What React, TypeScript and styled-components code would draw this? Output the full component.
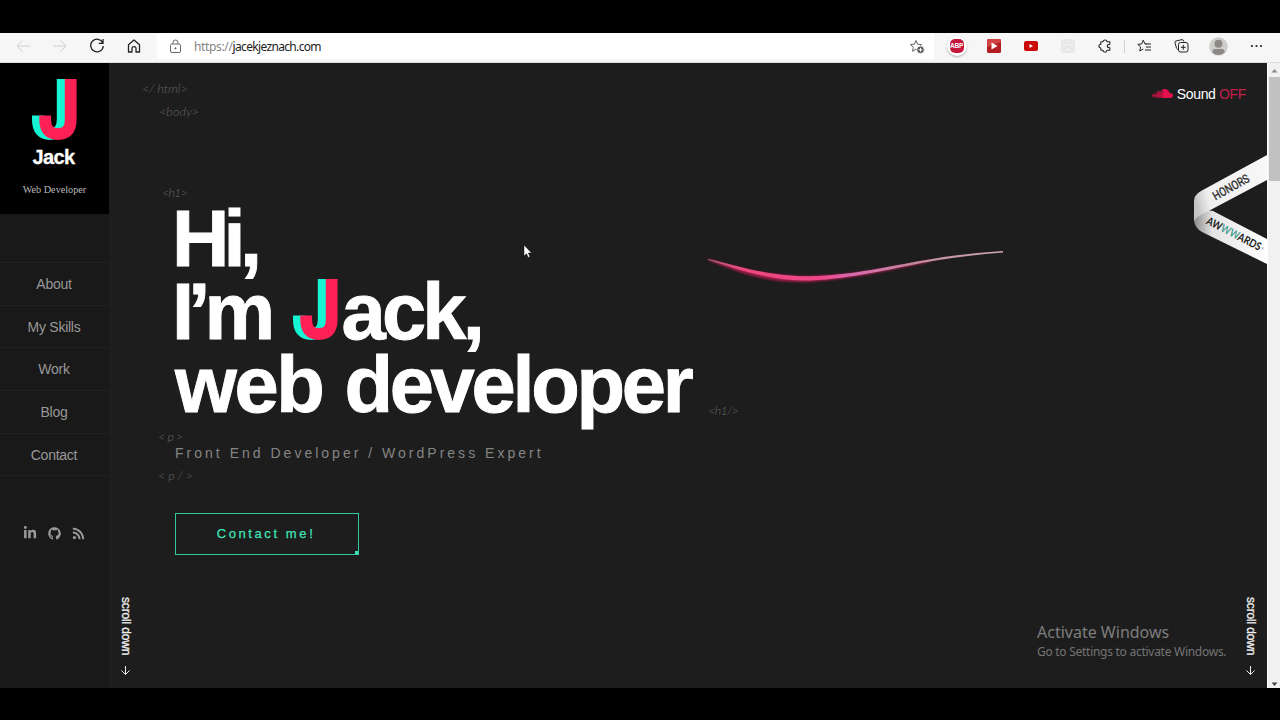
import React from 'react';
import styled, { createGlobalStyle } from 'styled-components';
import { FaLinkedinIn, FaGithub, FaRss, FaSoundcloud } from 'react-icons/fa';

const Global = createGlobalStyle`
  * { box-sizing: border-box; }
  body { margin: 0; background: #000; overflow: hidden; }
  svg { display: block; flex: none; }
`;

const sans = '"Liberation Sans", Arial, sans-serif';
const ui = '"Noto Sans", "Open Sans", sans-serif';

const Screen = styled.div`
  width: 1280px;
  height: 720px;
  padding: 33px 0 32px;
  display: flex;
  flex-direction: column;
  background: #000;
  font-family: ${sans};
`;

const Toolbar = styled.header`
  height: 30px;
  flex: none;
  display: flex;
  align-items: center;
  background: #f6f6f6;
  border-bottom: 1px solid #dcdfdc;
  padding-bottom: 3px;
`;

const NavButtons = styled.div`
  width: 157px;
  display: flex;
  align-items: center;
  gap: 21px;
  padding-left: 15px;
`;

const AddressBar = styled.div`
  width: 777px;
  height: 26px;
  display: flex;
  align-items: center;
  background: #fff;
  padding: 0 9px 0 11px;
`;

const Url = styled.span`
  flex: 1;
  padding-top: 2px;
  margin-left: 11px;
  font: 12px/16px ${ui};
  letter-spacing: -0.66px;
  color: #222;
  span { color: #858585; letter-spacing: -0.35px; }
`;

const Extensions = styled.div`
  flex: 1;
  display: flex;
  align-items: center;
  padding-left: 4px;
`;

const ToolCell = styled.span`
  width: 37px;
  flex: none;
  display: flex;
  justify-content: center;
`;

const AbpBadge = styled.span`
  width: 20px;
  height: 20px;
  border-radius: 50%;
  background: #fff;
  box-shadow: 0 1px 2px #aaa;
  display: grid;
  place-items: center;
  span {
    width: 14px;
    height: 14px;
    border-radius: 5px;
    background: #c4183c;
    color: #fff;
    font: bold 6.5px/14px ${sans};
    letter-spacing: -0.2px;
    text-align: center;
  }
`;

const Separator = styled.span`
  width: 1px;
  height: 13px;
  margin: 0 1px 0 1px;
  background: #cfcfcf;
`;

const Page = styled.div`
  flex: 1;
  min-height: 0;
  display: flex;
  background: #1d1d1d;
`;

const Sidebar = styled.aside`
  width: 109px;
  flex: none;
  background: #191919;
  display: flex;
  flex-direction: column;
`;

const Brand = styled.div`
  height: 151px;
  background: #000;
  display: flex;
  flex-direction: column;
  align-items: center;
  padding: 16px 0 0;
  margin-bottom: 48px;
`;

const BrandName = styled.div`
  margin: 5px 2px 0 0;
  font: bold 20px/24px ${sans};
  letter-spacing: -0.6px;
  color: #fff;
  -webkit-text-stroke: 0.3px #fff;
`;

const BrandRole = styled.div`
  margin-top: 14px;
  font: 10.2px/14px "Liberation Serif", serif;
  color: #b9b9b9;
`;

const Menu = styled.nav`
  border-top: 1px solid #202020;
`;

const MenuItem = styled.a`
  height: 42.7px;
  display: flex;
  align-items: center;
  justify-content: center;
  border-bottom: 1px solid #202020;
  padding-right: 1px;
  font-size: 14px;
  letter-spacing: -0.25px;
  color: #989898;
`;

const Socials = styled.div`
  margin-top: 50px;
  padding-right: 2px;
  display: flex;
  justify-content: center;
  align-items: center;
  gap: 11px;
  color: #999;
`;

const Main = styled.main`
  flex: 1;
  display: flex;
  justify-content: space-between;
  position: relative;
`;

const ScrollHint = styled.div`
  width: 33px;
  display: flex;
  flex-direction: column;
  align-items: center;
  justify-content: flex-end;
  gap: 10px;
  padding-bottom: 12px;
  color: #eee;
`;

const ScrollText = styled.span`
  writing-mode: vertical-rl;
  font: 12px/14px ${sans};
  -webkit-text-stroke: 0.3px #eee;
  letter-spacing: -0.15px;
`;

const Hero = styled.section`
  flex: 1;
  display: flex;
  flex-direction: column;
  align-items: flex-start;
  padding-top: 17px;
`;

const Tag = styled.span<{ $indent?: number; $top?: number; $spacing?: number }>`
  height: 18px;
  margin-left: ${(p) => p.$indent ?? 0}px;
  margin-top: ${(p) => p.$top ?? 0}px;
  font: italic 300 12.5px/18px Lato, ${sans};
  letter-spacing: ${(p) => p.$spacing ?? -0.7}px;
  color: #646464;
  white-space: pre;
  -webkit-text-stroke: 0;
`;

const Title = styled.h1`
  margin: 0 0 3px 33px;
  font: bold 79.5px/73px ${sans};
  color: #fff;
  -webkit-text-stroke: 0.9px #fff;
`;

const TitleLine = styled.span<{ $shift?: number }>`
  display: flex;
  height: 73px;
  margin-left: ${(p) => p.$shift ?? 0}px;
`;

const Word = styled.span<{ $spacing: number; $gap?: number }>`
  letter-spacing: ${(p) => p.$spacing}px;
  margin-right: ${(p) => p.$gap ?? 0}px;
`;

const Initial = styled.span`
  width: 48px;
  padding-top: 4px;
`;

const Subtitle = styled.p`
  margin: -2px 0 2px 33px;
  font-size: 14px;
  line-height: 18px;
  letter-spacing: 3.01px;
  color: #858585;
`;

const ContactButton = styled.button`
  width: 184px;
  height: 42px;
  margin: 28px 0 0 33px;
  padding: 0 2px 0 0;
  border: 1px solid #31c9a0;
  background: linear-gradient(#3fe3b8, #3fe3b8) right bottom / 3px 3px no-repeat;
  color: #3fe3b8;
  font: 13px/16px ${sans};
  -webkit-text-stroke: 0.25px #3fe3b8;
  letter-spacing: 2.6px;
`;

const Sound = styled.div`
  position: absolute;
  top: 20px;
  right: 21px;
  display: flex;
  align-items: center;
  gap: 4px;
  font-size: 14px;
  line-height: 18px;
  letter-spacing: -0.35px;
  color: #fff;
  svg { color: #e5114c; }
  em { font-style: normal; color: #c41f4c; }
`;

const Overlay = styled.div<{ $left: number; $top: number }>`
  position: absolute;
  left: ${(p) => p.$left}px;
  top: ${(p) => p.$top}px;
`;

const Watermark = styled(Overlay)`
  font: 12px/17px ${ui};
  letter-spacing: -0.27px;
  color: #747474;
  white-space: nowrap;
  strong {
    display: block;
    font-weight: 400;
    font-size: 16px;
    line-height: 22px;
    letter-spacing: 0;
    color: #7d7d7d;
  }
`;

const ScrollTrack = styled.div`
  width: 13px;
  flex: none;
  display: flex;
  flex-direction: column;
  align-items: center;
  justify-content: space-between;
  background: #f1f1f1;
  border-left: 1px solid #fff;
`;

const ScrollThumb = styled.div`
  width: 11px;
  height: 104px;
  background: #c1c1c1;
  margin-bottom: auto;
`;

const JMark = ({ width, height }: { width: number; height: number }) => (
  <svg width={width} height={height} viewBox="0 0 45 61" preserveAspectRatio="none" fill="none" strokeWidth="11.800">
    <path d="M30.700 0V40Q30.700 55 18 55Q5.900 55 5.900 41V36.500" stroke="#16f5d3" />
    <path d="M38.700 0V41Q38.700 55 26 55Q13.200 55 13.200 41V36.500" stroke="#ff2056" />
  </svg>
);

const BackArrow = ({ flip }: { flip?: boolean }) => (
  <svg width="16" height="16" viewBox="0 0 16 16" fill="none" stroke="#cfcfcf" strokeWidth="1">
    <path d={flip ? 'M1 8H14M8.500 2.500L14 8L8.500 13.500' : 'M15 8H2M7.500 2.500L2 8L7.500 13.500'} />
  </svg>
);

const DownArrow = () => (
  <svg width="11" height="11" viewBox="0 0 11 11" fill="none" stroke="#eee" strokeWidth="1">
    <path d="M5.500 1V9.500M1.500 5.500L5.500 9.500L9.500 5.500" />
  </svg>
);

const starPath = 'M7 1.500L8.600 5.200L12.600 5.600L9.600 8.300L10.500 12.300L7 10.200L3.500 12.300L4.400 8.300L1.400 5.600L5.400 5.200Z';

const BrowserBar = () => (
  <Toolbar>
    <NavButtons>
      <BackArrow />
      <BackArrow flip />
      <svg width="16" height="16" viewBox="0 0 16 16" fill="none" stroke="#222" strokeWidth="1.300">
        <path d="M13.800 5A6.300 6.300 0 1 0 14.300 8M14 1V5.300H9.700" />
      </svg>
      <svg width="16" height="16" viewBox="0 0 16 16" fill="none" stroke="#222" strokeWidth="1.300" strokeLinejoin="round">
        <path d="M2.500 6.800L8 2L13.500 6.800V14H10V10Q10 8.700 8 8.700Q6 8.700 6 10V14H2.500Z" />
      </svg>
    </NavButtons>
    <AddressBar>
      <svg width="15" height="15" viewBox="0 0 15 15" fill="none" stroke="#666" strokeWidth="1">
        <rect x="2.500" y="5" width="10" height="8.500" rx="1.500" />
        <path d="M5 5V3.500Q5 1 7.500 1Q10 1 10 3.500V5" />
        <circle cx="7.500" cy="9.300" r="0.600" fill="#666" />
      </svg>
      <Url><span>https://</span>jacekjeznach.com</Url>
      <svg width="16" height="15" viewBox="0 0 16 15" fill="none" stroke="#666" strokeWidth="1">
        <path d={starPath} />
        <circle cx="11.500" cy="10.800" r="3.800" fill="#555" stroke="#fff" strokeWidth="0.800" />
        <path d="M11.500 8.800V12.800M9.500 10.800H13.500" stroke="#fff" />
      </svg>
    </AddressBar>
    <Extensions>
      <ToolCell><AbpBadge><span>ABP</span></AbpBadge></ToolCell>
      <ToolCell>
        <svg width="14" height="14" viewBox="0 0 14 14">
          <rect width="14" height="14" rx="1.500" fill="#b31e20" />
          <path d="M0 8L14 3V1.500Q14 0 12.500 0H1.500Q0 0 0 1.500Z" fill="#cf4442" />
          <path d="M4.500 3.500L10.500 7L4.500 10.500Z" fill="#fff" />
        </svg>
      </ToolCell>
      <ToolCell>
        <svg width="14" height="10" viewBox="0 0 14 10">
          <rect width="14" height="10" rx="2" fill="#cc0909" />
          <path d="M5.500 3L9 5L5.500 7Z" fill="#fff" />
        </svg>
      </ToolCell>
      <ToolCell>
        <svg width="14" height="14" viewBox="0 0 14 14" fill="none" stroke="#ddd">
          <rect x="1" y="1" width="12" height="12" rx="1" fill="#eee" />
          <path d="M3 3.500H7M9 3.500H11M3 10Q7 5 11 10" />
        </svg>
      </ToolCell>
      <ToolCell>
        <svg width="14" height="14" viewBox="0 0 14 14" fill="none" stroke="#222" strokeWidth="1.100" strokeLinejoin="round">
          <path d="M3.500 2.800H5Q5.200 1 7 1Q8.800 1 9 2.800H11.800V5.300Q9.300 5.300 9.300 7Q9.300 8.700 11.800 8.700V11.300H9Q8.800 13.200 7 13.200Q5.200 13.200 5 11.300H3.500Q2.800 11.300 2.800 10.500V9Q0.800 8.800 0.800 7.100Q0.800 5.400 2.800 5.200V3.500Q2.800 2.800 3.500 2.800Z" />
        </svg>
      </ToolCell>
      <Separator />
      <ToolCell>
        <svg width="15" height="14" viewBox="0 0 15 14" fill="none" stroke="#222" strokeWidth="1">
          <path d="M9.500 5H8L6.200 1.200L4.600 5L0.800 5.400L3.600 8L2.800 12L6.300 10M8.500 5H14M9 8H14M8 11H14" />
        </svg>
      </ToolCell>
      <ToolCell>
        <svg width="15" height="14" viewBox="0 0 15 14" fill="none" stroke="#222" strokeWidth="1">
          <path d="M3.800 10.500L2.500 9.300L1 3.500Q0.800 2.300 2 2L8 0.600Q9.400 0.500 9.900 2.500" />
          <rect x="4.500" y="3.500" width="9.500" height="9.500" rx="2" fill="#f6f6f6" />
          <path d="M9.250 5.800V10.800M6.800 8.300H11.700" />
        </svg>
      </ToolCell>
      <ToolCell>
        <svg width="19" height="19" viewBox="0 0 19 19">
          <circle cx="9.500" cy="9.500" r="9.300" fill="#d0cecb" />
          <circle cx="9.500" cy="6.800" r="4" fill="#8b8987" />
          <path d="M3.300 15.500Q3.300 12 6 12H13Q15.700 12 15.700 15.500Q13 18 9.500 18Q6 18 3.300 15.500Z" fill="#8b8987" />
        </svg>
      </ToolCell>
      <ToolCell>
        <svg width="14" height="4" viewBox="0 0 14 4" fill="#222">
          <circle cx="3" cy="2" r="1.100" />
          <circle cx="7.500" cy="2" r="1.100" />
          <circle cx="12" cy="2" r="1.100" />
        </svg>
      </ToolCell>
    </Extensions>
  </Toolbar>
);

const Brushstroke = () => (
  <svg width="300" height="36" viewBox="0 0 300 36">
    <defs>
      <linearGradient id="stroke" x1="0" x2="1">
        <stop offset="0" stopColor="#a85a70" />
        <stop offset="0.120" stopColor="#ec4a7c" />
        <stop offset="0.380" stopColor="#ee4688" />
        <stop offset="0.480" stopColor="#d868ac" />
        <stop offset="0.700" stopColor="#c08a9e" />
        <stop offset="1" stopColor="#d0a8b4" />
      </linearGradient>
      <filter id="soft" x="-5%" y="-30%" width="110%" height="160%"><feGaussianBlur stdDeviation="0.800" /></filter>
    </defs>
    <path d="M3 9C35 18 60 26 105 26C150 25 190 16 225 10V12C190 19 150 29 105 32C60 33 35 23 3 10Z" fill="#c01e58" filter="url(#soft)" opacity="0.800" />
    <path d="M3 9C35 16 60 26 105 26.300C150 25 185 16 218 10.500Q255 3.500 298 0.900V2.500Q255 6 218 12.700C185 19 150 28 105 30.600C65 31 35 20 3 10Z" fill="url(#stroke)" />
  </svg>
);

const AwardRibbon = () => (
  <svg width="74" height="112" viewBox="0 0 74 112">
    <defs>
      <linearGradient id="upper" x1="0" y1="0.600" x2="1" y2="0.400">
        <stop offset="0" stopColor="#c4c4c4" />
        <stop offset="0.180" stopColor="#efefef" />
        <stop offset="1" stopColor="#f7f7f7" />
      </linearGradient>
      <linearGradient id="lower" x1="0" x2="1">
        <stop offset="0" stopColor="#8a8a8a" />
        <stop offset="0.250" stopColor="#e4e4e4" />
        <stop offset="1" stopColor="#fff" />
      </linearGradient>
    </defs>
    <path d="M1 55V68Q2 75 9 79L74 111V86L20 58Z" fill="url(#lower)" />
    <path d="M74 2L8 38Q1 42 1 48V68Q2 65 8 62L74 27Z" fill="url(#upper)" />
    <text transform="translate(22.500 47.500) rotate(-29)" fontFamily="Roboto, sans-serif" fontSize="12" fill="#2b2b2b" stroke="#2b2b2b" strokeWidth="0.350" textLength="40" lengthAdjust="spacingAndGlyphs">HONORS</text>
    <text transform="translate(12.500 70.500) rotate(27)" fontFamily="Lato, sans-serif" fontWeight="700" fontSize="11" fill="#1a1a1a" textLength="60" lengthAdjust="spacingAndGlyphs">AW<tspan fill="#4d9f96">WW</tspan>ARDS</text>
    <text x="68" y="97" fontFamily={sans} fontSize="4" fill="#555">®</text>
  </svg>
);

const ScrollDown = () => (
  <ScrollHint>
    <ScrollText>scroll down</ScrollText>
    <DownArrow />
  </ScrollHint>
);

const menu = ['About', 'My Skills', 'Work', 'Blog', 'Contact'];

export default function App() {
  return (
    <Screen>
      <Global />
      <BrowserBar />
      <Page>
        <Sidebar>
          <Brand>
            <JMark width={45} height={61} />
            <BrandName>Jack</BrandName>
            <BrandRole>Web Developer</BrandRole>
          </Brand>
          <Menu>
            {menu.map((label) => <MenuItem key={label}>{label}</MenuItem>)}
          </Menu>
          <Socials>
            <FaLinkedinIn size={14} />
            <FaGithub size={13} />
            <FaRss size={13} />
          </Socials>
        </Sidebar>
        <Main>
          <ScrollDown />
          <Hero>
            <Tag $indent={0} $spacing={0}>{'</ html>'}</Tag>
            <Tag $indent={17} $top={5} $spacing={0.1}>{'<body>'}</Tag>
            <Tag $indent={20} $top={63} $spacing={-0.8}>{'<h1>'}</Tag>
            <Title>
              <TitleLine $shift={-3}><Word $spacing={-5.8}>Hi,</Word></TitleLine>
              <TitleLine $shift={-3}>
                <Word $spacing={-5.8} $gap={24}>I’m</Word>
                <Initial><JMark width={45} height={61} /></Initial>
                <Word $spacing={-3.8}>ack,</Word>
              </TitleLine>
              <TitleLine>
                <Word $spacing={-2.4} $gap={22}>web</Word>
                <Word $spacing={-3.3}>developer</Word>
                <Tag $indent={18} $top={54}>{'<h1/>'}</Tag>
              </TitleLine>
            </Title>
            <Tag $indent={16} $top={4} $spacing={2.2}>{'<p>'}</Tag>
            <Subtitle>Front End Developer / WordPress Expert</Subtitle>
            <Tag $indent={16} $top={3} $spacing={3}>{'<p/>'}</Tag>
            <ContactButton>Contact me!</ContactButton>
          </Hero>
          <ScrollDown />
          <Sound>
            <FaSoundcloud size={21} />
            <span>Sound <em>OFF</em></span>
          </Sound>
          <Overlay $left={596} $top={187}><Brushstroke /></Overlay>
          <Overlay $left={1084} $top={90}><AwardRibbon /></Overlay>
          <Overlay $left={414} $top={181}>
            <svg width="10" height="15" viewBox="0 0 10 15">
              <path d="M1 1V12L3.500 9.700L5.200 13.500L7 12.700L5.300 9H8.500Z" fill="#fff" stroke="#111" strokeWidth="0.500" />
            </svg>
          </Overlay>
          <Watermark $left={928} $top={558}>
            <strong>Activate Windows</strong>
            Go to Settings to activate Windows.
          </Watermark>
        </Main>
        <ScrollTrack>
          <svg width="11" height="14" viewBox="0 0 11 14"><path d="M2.500 9.500L5.500 6L8.500 9.500Z" fill="#8b8b8b" /></svg>
          <ScrollThumb />
          <svg width="11" height="10" viewBox="0 0 11 10"><path d="M2.500 4.500H8.500L5.500 8Z" fill="#444" /></svg>
        </ScrollTrack>
      </Page>
    </Screen>
  );
}
